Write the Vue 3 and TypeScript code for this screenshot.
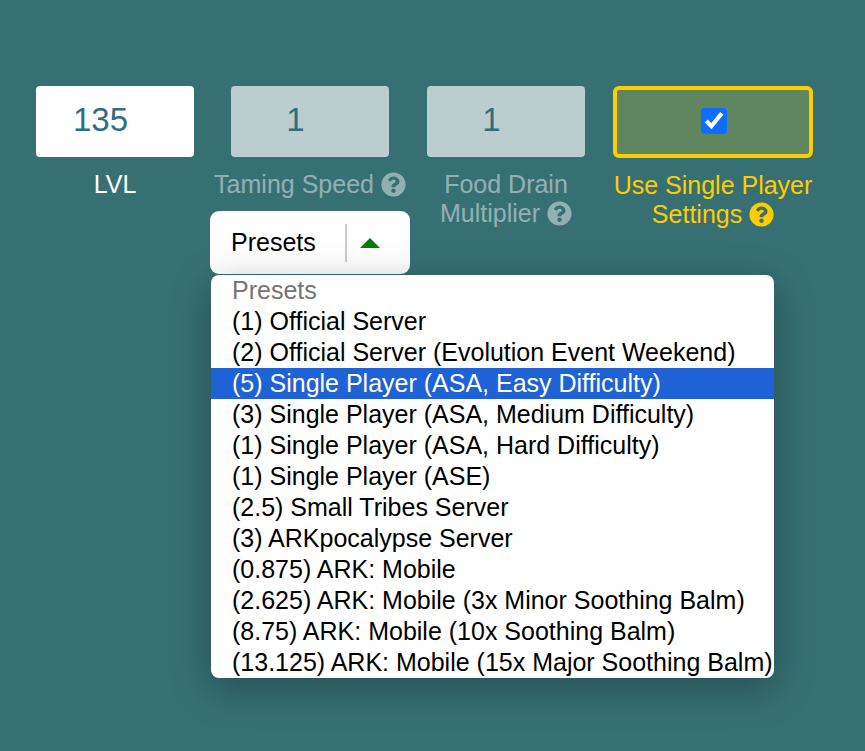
<script setup lang="ts">
const help = 'M504 256c0 136.997-111.043 248-248 248S8 392.997 8 256C8 119.083 119.043 8 256 8s248 111.083 248 248zM262.655 90c-54.497 0-89.255 22.957-116.549 63.758-3.536 5.286-2.353 12.415 2.715 16.258l34.699 26.31c5.205 3.947 12.621 3.008 16.665-2.122 17.864-22.658 30.113-35.797 57.303-35.797 20.429 0 45.698 13.148 45.698 32.958 0 14.976-12.363 22.667-32.534 33.976C247.128 238.528 216 254.941 216 296v4c0 6.627 5.373 12 12 12h56c6.627 0 12-5.373 12-12v-1.333c0-28.462 83.186-29.647 83.186-106.667 0-58.002-60.165-102-116.531-102zM256 338c-25.365 0-46 20.635-46 46 0 25.364 20.635 46 46 46s46-20.636 46-46c0-25.365-20.635-46-46-46z'
const options: string[] = [
  '(1) Official Server',
  '(2) Official Server (Evolution Event Weekend)',
  '(5) Single Player (ASA, Easy Difficulty)',
  '(3) Single Player (ASA, Medium Difficulty)',
  '(1) Single Player (ASA, Hard Difficulty)',
  '(1) Single Player (ASE)',
  '(2.5) Small Tribes Server',
  '(3) ARKpocalypse Server',
  '(0.875) ARK: Mobile',
  '(2.625) ARK: Mobile (3x Minor Soothing Balm)',
  '(8.75) ARK: Mobile (10x Soothing Balm)',
  '(13.125) ARK: Mobile (15x Major Soothing Balm)',
]
</script>

<template>
  <div class="page">
    <div class="row">
      <div class="col">
        <input class="num" type="text" value="135" />
        <div class="label">LVL</div>
      </div>
      <div class="col second">
        <input class="num muted" type="text" value="1" />
        <div class="label muted-label">
          Taming Speed
          <svg class="help" viewBox="0 0 512 512"><path :d="help" fill="currentColor" /></svg>
        </div>
        <div class="select">
          <span class="select-text">Presets</span>
          <span class="sep"></span>
          <span class="arrow"></span>
        </div>
        <div class="menu">
          <div class="opt disabled">Presets</div>
          <div v-for="(o, i) in options" :key="i" class="opt" :class="{ selected: i === 2 }">{{ o }}</div>
        </div>
      </div>
      <div class="col third">
        <input class="num muted" type="text" value="1" />
        <div class="label muted-label">
          Food Drain<br />Multiplier
          <svg class="help" viewBox="0 0 512 512"><path :d="help" fill="currentColor" /></svg>
        </div>
      </div>
      <div class="col fourth">
        <div class="check-box"><input class="check" type="checkbox" checked /></div>
        <div class="label yellow">
          Use Single Player<br />Settings
          <svg class="help" viewBox="0 0 512 512"><path :d="help" fill="currentColor" /></svg>
        </div>
      </div>
    </div>
  </div>
</template>

<style>
html, body { margin: 0; background: #377073; }
</style>

<style scoped>
.page {
  width: 865px;
  height: 751px;
  overflow: hidden;
  background: #377073;
  font-family: "Liberation Sans", Arial, sans-serif;
  font-size: 25px;
  box-sizing: border-box;
  padding: 86px 0 0 36px;
}
.row { display: flex; align-items: flex-start; }
.col {
  width: 158px;
  display: flex;
  flex-direction: column;
  align-items: center;
  flex: none;
}
.second { margin-left: 37px; position: relative; }
.third { margin-left: 38px; }
.fourth { margin-left: 28px; width: 200px; }
.num {
  width: 158px;
  height: 71px;
  box-sizing: border-box;
  border: 0;
  border-radius: 4px;
  background: #fff;
  color: #2f6f7c;
  font-family: inherit;
  font-size: 33px;
  text-align: center;
  padding: 0 29px 3px 0;
  outline: none;
}
.muted { opacity: 0.66; }
.label {
  margin: 13px -30px 0;
  color: #fff;
  text-align: center;
  line-height: 29px;
  white-space: nowrap;
}
.muted-label { color: #fff; opacity: 0.45; }
.yellow { color: #ffcc00; }
.help {
  width: 25px;
  height: 25px;
  vertical-align: -4px;
}
.select {
  width: 200px;
  height: 63px;
  margin-top: 12px;
  flex: none;
  box-sizing: border-box;
  background: #fff;
  border-radius: 9px;
  color: #000;
  display: flex;
  align-items: center;
  padding-left: 21px;
}
.select-text { width: 114px; }
.sep { width: 2px; height: 38px; background: #ccc; }
.arrow {
  margin-left: 13px;
  width: 0;
  height: 0;
  border-left: 10px solid transparent;
  border-right: 10px solid transparent;
  border-bottom: 10px solid #008000;
}
.menu {
  position: absolute;
  left: -20px;
  top: 189px;
  width: 563px;
  background: #fff;
  border-radius: 8px;
  box-shadow: 0 10px 40px rgba(0, 0, 0, 0.3);
  overflow: hidden;
  color: #000;
}
.opt {
  height: 31px;
  line-height: 30px;
  padding-left: 21px;
  white-space: nowrap;
}
.disabled { color: #757575; }
.selected { background: #1f62d6; color: #fff; }
.check-box {
  width: 200px;
  height: 72px;
  box-sizing: border-box;
  border: 4px solid #ffcc00;
  border-radius: 6px;
  background: #5f865f;
  display: flex;
  align-items: center;
  justify-content: center;
  padding: 0 0 2px 2px;
}
.check { width: 26px; height: 26px; margin: 0; accent-color: #0d6efd; }
</style>
